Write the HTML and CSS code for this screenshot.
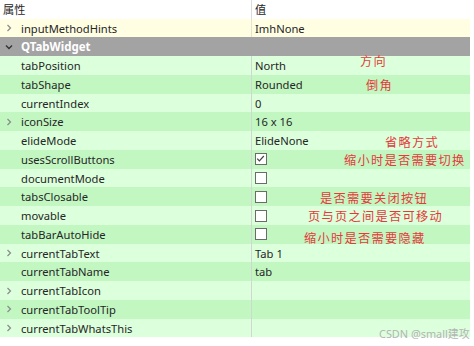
FILE: index.html
```html
<!DOCTYPE html>
<html lang="zh">
<head>
<meta charset="utf-8">
<link rel="stylesheet" href="styles.css">
</head>
<body>
<div class="sheet">
  <div class="row head"><div class="c1">属性</div><div class="c2">值</div></div>
  <div class="row yellow"><div class="c1"><span class="chev"><svg viewBox="0 0 8 8" width="8" height="8"><path d="M2.5 1 L5.5 4 L2.5 7" fill="none" stroke="#8a8a8a" stroke-width="1.2"/></svg></span>inputMethodHints</div><div class="c2">ImhNone</div></div>
  <div class="row group"><div class="c1"><span class="chev"><svg viewBox="0 0 8 8" width="8" height="8"><path d="M1 2.5 L4 5.5 L7 2.5" fill="none" stroke="#333" stroke-width="1.4"/></svg></span>QTabWidget</div><div class="c2"></div></div>
  <div class="row lt"><div class="c1"><span class="chev"></span>tabPosition</div><div class="c2">North</div></div>
  <div class="row dk"><div class="c1"><span class="chev"></span>tabShape</div><div class="c2">Rounded</div></div>
  <div class="row lt"><div class="c1"><span class="chev"></span>currentIndex</div><div class="c2">0</div></div>
  <div class="row dk"><div class="c1"><span class="chev"><svg viewBox="0 0 8 8" width="8" height="8"><path d="M2.5 1 L5.5 4 L2.5 7" fill="none" stroke="#8a8a8a" stroke-width="1.2"/></svg></span>iconSize</div><div class="c2">16 x 16</div></div>
  <div class="row lt"><div class="c1"><span class="chev"></span>elideMode</div><div class="c2">ElideNone</div></div>
  <div class="row dk"><div class="c1"><span class="chev"></span>usesScrollButtons</div><div class="c2"><span class="box"><svg viewBox="0 0 11 11" width="11" height="11"><path d="M2.2 5.6 L4.4 7.8 L8.8 3" fill="none" stroke="#444" stroke-width="1.2"/></svg></span></div></div>
  <div class="row lt"><div class="c1"><span class="chev"></span>documentMode</div><div class="c2"><span class="box"></span></div></div>
  <div class="row dk"><div class="c1"><span class="chev"></span>tabsClosable</div><div class="c2"><span class="box"></span></div></div>
  <div class="row lt"><div class="c1"><span class="chev"></span>movable</div><div class="c2"><span class="box"></span></div></div>
  <div class="row dk"><div class="c1"><span class="chev"></span>tabBarAutoHide</div><div class="c2"><span class="box"></span></div></div>
  <div class="row lt"><div class="c1"><span class="chev"><svg viewBox="0 0 8 8" width="8" height="8"><path d="M2.5 1 L5.5 4 L2.5 7" fill="none" stroke="#8a8a8a" stroke-width="1.2"/></svg></span>currentTabText</div><div class="c2">Tab 1</div></div>
  <div class="row dk"><div class="c1"><span class="chev"></span>currentTabName</div><div class="c2">tab</div></div>
  <div class="row lt"><div class="c1"><span class="chev"><svg viewBox="0 0 8 8" width="8" height="8"><path d="M2.5 1 L5.5 4 L2.5 7" fill="none" stroke="#8a8a8a" stroke-width="1.2"/></svg></span>currentTabIcon</div><div class="c2"></div></div>
  <div class="row dk"><div class="c1"><span class="chev"><svg viewBox="0 0 8 8" width="8" height="8"><path d="M2.5 1 L5.5 4 L2.5 7" fill="none" stroke="#8a8a8a" stroke-width="1.2"/></svg></span>currentTabToolTip</div><div class="c2"></div></div>
  <div class="row lt"><div class="c1"><span class="chev"><svg viewBox="0 0 8 8" width="8" height="8"><path d="M2.5 1 L5.5 4 L2.5 7" fill="none" stroke="#8a8a8a" stroke-width="1.2"/></svg></span>currentTabWhatsThis</div><div class="c2"></div></div>

  <span class="note n1">方向</span>
  <span class="note n2">倒角</span>
  <span class="note n3">省略方式</span>
  <span class="note n4">缩小时是否需要切换</span>
  <span class="note n5">是否需要关闭按钮</span>
  <span class="note n6">页与页之间是否可移动</span>
  <span class="note n7">缩小时是否需要隐藏</span>
  <span class="mark">CSDN @small建攻</span>
</div>
</body>
</html>
```
FILE: styles.css
```css
html, body {
  margin: 0;
  padding: 0;
  background: #ffffff;
}
body {
  width: 474px;
  height: 346px;
  overflow: hidden;
  font-family: "Noto Sans", "Noto Sans CJK SC", sans-serif;
  font-size: 11.2px;
  color: #262626;
}
.sheet {
  position: relative;
  width: 470px;
  height: 346px;
}
.row {
  display: grid;
  grid-template-columns: 251px 1fr;
  height: 18.75px;
  align-items: stretch;
}
.row.head {
  height: 18.7px;
  background: #ffffff;
}
.c1, .c2 {
  display: flex;
  align-items: center;
  white-space: nowrap;
  overflow: hidden;
}
.c1 {
  padding-left: 4px;
}
.c2 {
  border-left: 1px solid #cfd8cf;
  padding-left: 3px;
}
.head .c1 {
  padding-left: 3px;
}
.head .c2 {
  border-left: 1px solid #dcdcdc;
}
.chev {
  width: 16px;
  flex: none;
  display: flex;
  align-items: center;
  justify-content: flex-start;
  padding-left: 1px;
}
.yellow {
  background: #fffde2;
}
.yellow .c2 {
  border-left-color: #e6e4cc;
}
.group {
  background: #a3a3a3;
}
.group .c1 {
  color: #ffffff;
  font-weight: bold;
  font-size: 11.5px;
}
.group .c2 {
  border-left: none;
}
.lt {
  background: #dcffdc;
}
.dk {
  background: #c2f7c2;
}
.box {
  width: 10px;
  height: 10px;
  border: 1px solid #6b6b6b;
  background: #ffffff;
  display: flex;
}
.box svg {
  margin: -1px 0 0 -1px;
}
.note {
  position: absolute;
  font-family: "Noto Sans CJK SC", sans-serif;
  font-size: 12.2px;
  letter-spacing: 1.3px;
  line-height: 14px;
  color: #e5393a;
  white-space: nowrap;
}
.n1 { left: 360px; top: 54px; }
.n2 { left: 366px; top: 78px; }
.n3 { left: 385px; top: 135px; }
.n4 { left: 344px; top: 153px; }
.n5 { left: 320px; top: 191px; }
.n6 { left: 308px; top: 209px; }
.n7 { left: 304px; top: 231px; }
.mark {
  position: absolute;
  left: 379px;
  top: 327px;
  font-family: "Noto Sans", "Noto Sans CJK SC", sans-serif;
  font-size: 10.9px;
  line-height: 14px;
  color: #b4b4b4;
  white-space: nowrap;
}
```
